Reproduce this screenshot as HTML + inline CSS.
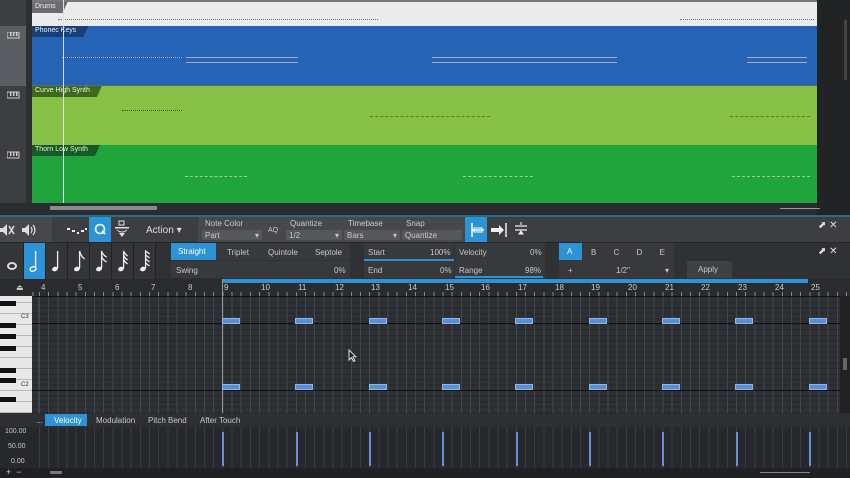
<!DOCTYPE html>
<html><head><meta charset="utf-8"><style>
*{margin:0;padding:0;box-sizing:border-box}
body{width:850px;height:478px;overflow:hidden;background:#25272a;font-family:"Liberation Sans",sans-serif;font-size:8px;color:#c8c8c8;position:relative}
.a{position:absolute}
.tl{position:absolute;left:32px;height:11px;padding:1px 12px 0 3px;font-size:7px;color:#eee;clip-path:polygon(0 0,100% 0,calc(100% - 5px) 100%,0 100%)}
.btn{position:absolute;top:243px;height:36px;border-right:1px solid #222}
.nt{position:absolute;height:6px;width:18px;background:#5b8fd0;border:1px solid #8fb6e6}
.vl{position:absolute;top:432px;height:34px;width:2px;background:#6b8fd6}
.rn{position:absolute;top:283px;font-size:8px;color:#ccc}
</style></head><body>
<div class="a" style="left:0;top:0;width:32px;height:203px;background:#3c3e42"></div>
<div class="a" style="left:0;top:26px;width:26px;height:60px;background:#5a5d62"></div>
<div class="a" style="left:26px;top:0;width:6px;height:203px;background:#2e3033"></div>
<svg class="a" style="left:7px;top:32px" width="14" height="140" viewBox="0 0 14 140" fill="#ccc">
<g><rect x="0" y="0" width="12" height="6" fill="none" stroke="#ccc"/><rect x="3" y="0" width="1.5" height="4"/><rect x="6" y="0" width="1.5" height="4"/><rect x="9" y="0" width="1.5" height="4"/></g>
<g transform="translate(0,60)"><rect x="0" y="0" width="12" height="6" fill="none" stroke="#ccc"/><rect x="3" y="0" width="1.5" height="4"/><rect x="6" y="0" width="1.5" height="4"/><rect x="9" y="0" width="1.5" height="4"/></g>
<g transform="translate(0,120)"><rect x="0" y="0" width="12" height="6" fill="none" stroke="#ccc"/><rect x="3" y="0" width="1.5" height="4"/><rect x="6" y="0" width="1.5" height="4"/><rect x="9" y="0" width="1.5" height="4"/></g>
</svg>
<div class="a" style="left:32px;top:0;width:785px;height:2px;background:#777"></div>
<div class="a" style="left:32px;top:2px;width:785px;height:24px;background:#ebebeb"></div>
<div class="a" style="left:58px;top:19px;width:320px;border-top:1px dotted #777"></div>
<div class="a" style="left:680px;top:19px;width:134px;border-top:1px dotted #777"></div>
<div class="tl" style="top:2px;background:#6a6c70">Drums</div>
<div class="a" style="left:32px;top:26px;width:785px;height:59px;background:#2564b4"></div>
<div class="a" style="left:62px;top:57px;width:120px;border-top:1px dotted #aac"></div>
<div class="a" style="left:186px;top:57px;width:112px;border-top:1px solid #aac"></div>
<div class="a" style="left:186px;top:62px;width:112px;border-top:1px solid #aac"></div>
<div class="a" style="left:432px;top:57px;width:185px;border-top:1px solid #aac"></div>
<div class="a" style="left:432px;top:62px;width:185px;border-top:1px solid #aac"></div>
<div class="a" style="left:747px;top:57px;width:60px;border-top:1px solid #aac"></div>
<div class="a" style="left:747px;top:62px;width:60px;border-top:1px solid #aac"></div>
<div class="tl" style="top:26px;background:#173f7a">Phonec Keys</div>
<div class="a" style="left:32px;top:85px;width:785px;height:1px;background:#666"></div>
<div class="a" style="left:32px;top:86px;width:785px;height:59px;background:#86c044"></div>
<div class="a" style="left:122px;top:110px;width:60px;border-top:1px dotted #3a5a20"></div>
<div class="a" style="left:370px;top:116px;width:120px;border-top:1px dashed #5a7a30"></div>
<div class="a" style="left:730px;top:116px;width:80px;border-top:1px dashed #5a7a30"></div>
<div class="tl" style="top:86px;background:#3e6a1c">Curve High Synth</div>
<div class="a" style="left:32px;top:145px;width:785px;height:58px;background:#20a53c"></div>
<div class="a" style="left:185px;top:176px;width:62px;border-top:1px dashed #8cd49a"></div>
<div class="a" style="left:463px;top:176px;width:70px;border-top:1px dashed #8cd49a"></div>
<div class="a" style="left:732px;top:176px;width:78px;border-top:1px dashed #8cd49a"></div>
<div class="tl" style="top:145px;background:#155a22">Thorn Low Synth</div>
<div class="a" style="left:63px;top:0;width:1px;height:203px;background:#dde"></div>
<div class="a" style="left:817px;top:0;width:33px;height:215px;background:#222325"></div>
<div class="a" style="left:844px;top:20px;width:3px;height:60px;background:#444"></div>
<div class="a" style="left:0;top:203px;width:817px;height:12px;background:#2b2c2f"></div>
<div class="a" style="left:50px;top:206px;width:107px;height:4px;background:#8a8b8e"></div>
<div class="a" style="left:780px;top:208px;width:40px;height:1px;background:#999"></div>
<div class="a" style="left:0;top:215px;width:850px;height:2px;background:#1f6f86"></div>
<!-- toolbar -->
<div class="a" style="left:0;top:217px;width:850px;height:25px;background:#3c3e42"></div>
<div class="a" style="left:0;top:217px;width:52px;height:25px;background:#46484c"></div>
<svg class="a" style="left:0;top:222px" width="50" height="16" viewBox="0 0 50 16" fill="#ddd" stroke="#ddd">
<path d="M0 6h3l4-4v12l-4-4H0z" stroke="none"/><path d="M9 4l5 8M14 4l-5 8" stroke-width="1.5"/>
<path d="M22 6h3l4-4v12l-4-4h-3z" stroke="none"/><path d="M31 5q2 3 0 6M33 3q4 5 0 10" fill="none" stroke-width="1.2"/>
</svg>
<svg class="a" style="left:66px;top:224px" width="22" height="12" viewBox="0 0 22 12" fill="#eee"><path d="M1 4h3v2H1zM6 6h3v2H6zM11 8h2v2h-2zM15 6h3v2h-3zM19 4h2v2h-2z"/></svg>
<div class="a" style="left:89px;top:217px;width:22px;height:25px;background:#2c93d6"></div>
<svg class="a" style="left:93px;top:222px" width="14" height="14" viewBox="0 0 14 14"><circle cx="7" cy="7" r="4.5" fill="none" stroke="#fff" stroke-width="1.6"/><path d="M9 9l3 3" stroke="#fff" stroke-width="1.6"/></svg>
<svg class="a" style="left:115px;top:220px" width="14" height="18" viewBox="0 0 14 18" fill="#ddd"><rect x="4" y="1" width="5" height="4" fill="none" stroke="#ddd"/><rect x="0" y="7" width="14" height="1.5"/><path d="M2 10q5 4 10 0" fill="none" stroke="#ddd"/><path d="M4 13h6l-3 4z"/></svg>
<div class="a" style="left:146px;top:225px;font-size:10px;color:#ddd">Action ▾</div>
<div class="a" style="left:198px;top:217px;width:267px;height:25px;background:#46484c"></div>
<div class="a" style="left:205px;top:219px;font-size:8px">Note Color</div>
<div class="a" style="left:202px;top:230px;width:60px;height:10px;background:#55575b;padding:1px 3px">Part<span style="float:right">▾</span></div>
<div class="a" style="left:268px;top:227px;font-size:7px">AQ</div>
<div class="a" style="left:290px;top:219px">Quantize</div>
<div class="a" style="left:286px;top:230px;width:56px;height:10px;background:#55575b;padding:1px 3px">1/2<span style="float:right">▾</span></div>
<div class="a" style="left:348px;top:219px">Timebase</div>
<div class="a" style="left:344px;top:230px;width:56px;height:10px;background:#55575b;padding:1px 3px">Bars<span style="float:right">▾</span></div>
<div class="a" style="left:406px;top:219px">Snap</div>
<div class="a" style="left:402px;top:230px;width:60px;height:10px;background:#55575b;padding:1px 3px">Quantize</div>
<div class="a" style="left:465px;top:217px;width:22px;height:25px;background:#2c93d6"></div>
<svg class="a" style="left:468px;top:221px" width="70" height="18" viewBox="0 0 70 18">
<path d="M4 2v14M4 9h12" stroke="#fff" stroke-width="1.5"/><rect x="6" y="7" width="8" height="4" fill="none" stroke="#fff"/>
<path d="M23 7h8V4l5 5-5 5v-3h-8z" fill="#eee"/><path d="M38 2v14" stroke="#eee" stroke-width="1.5"/>
<path d="M47 5h12M47 9h12" stroke="#eee" stroke-width="1.2"/><path d="M53 1v3M51 13h4l-2 -3z" stroke="#eee" fill="#eee"/>
</svg>
<div class="a" style="left:818px;top:220px;font-size:10px;color:#ddd">⬈ ✕</div>
<!-- row 2 -->
<div class="a" style="left:0;top:243px;width:850px;height:36px;background:#2f3134"></div>
<div class="btn" style="left:0;width:24px;background:#333539"></div>
<svg class="a" style="left:7px;top:262px" width="10" height="8"><ellipse cx="5" cy="4" rx="4" ry="3" fill="none" stroke="#ddd" stroke-width="2"/></svg>
<div class="btn" style="left:24px;width:22px;background:#2c93d6"></div>
<div class="btn" style="left:46px;width:22px;background:#333539"></div>
<div class="btn" style="left:68px;width:22px;background:#333539"></div>
<div class="btn" style="left:90px;width:22px;background:#333539"></div>
<div class="btn" style="left:112px;width:22px;background:#333539"></div>
<div class="btn" style="left:134px;width:22px;background:#333539"></div>
<svg class="a" style="left:24px;top:248px" width="132" height="26" viewBox="0 0 132 26" stroke-width="1.3">
<ellipse cx="9" cy="21" rx="3" ry="2.2" fill="none" stroke="#fff" transform="rotate(-20 9 21)"/><path d="M11.6 20V3" stroke="#fff"/>
<ellipse cx="31" cy="21" rx="3" ry="2.2" fill="#eee" transform="rotate(-20 31 21)"/><path d="M33.6 20V3" stroke="#eee"/>
<ellipse cx="53" cy="21" rx="3" ry="2.2" fill="#eee" transform="rotate(-20 53 21)"/><path d="M55.6 20V3q1 5 5 8" stroke="#eee" fill="none"/>
<ellipse cx="75" cy="21" rx="3" ry="2.2" fill="#eee" transform="rotate(-20 75 21)"/><path d="M77.6 20V3q1 4 5 6M77.6 8q1 4 5 6" stroke="#eee" fill="none"/>
<ellipse cx="97" cy="21" rx="3" ry="2.2" fill="#eee" transform="rotate(-20 97 21)"/><path d="M99.6 20V3q1 3 4 5M99.6 7q1 3 4 5M99.6 11q1 3 4 5" stroke="#eee" fill="none"/>
<ellipse cx="119" cy="21" rx="3" ry="2.2" fill="#eee" transform="rotate(-20 119 21)"/><path d="M121.6 20V3l4 3M121.6 7l4 3M121.6 11l4 3M121.6 15l4 3" stroke="#eee" fill="none"/>
</svg>
<div class="a" style="left:171px;top:243px;width:45px;height:17px;background:#2c93d6;color:#fff;padding:4px 0 0 7px">Straight</div>
<div class="a" style="left:216px;top:243px;width:134px;height:17px;background:#37393d"></div>
<div class="a" style="left:227px;top:248px">Triplet</div>
<div class="a" style="left:268px;top:248px">Quintole</div>
<div class="a" style="left:315px;top:248px">Septole</div>
<div class="a" style="left:171px;top:261px;width:179px;height:17px;background:#37393d"></div>
<div class="a" style="left:176px;top:266px">Swing</div>
<div class="a" style="left:334px;top:266px">0%</div>
<div class="a" style="left:364px;top:243px;width:90px;height:35px;background:#37393d"></div>
<div class="a" style="left:368px;top:248px">Start</div><div class="a" style="left:430px;top:248px">100%</div>
<div class="a" style="left:364px;top:259px;width:90px;height:2px;background:#2c93d6"></div>
<div class="a" style="left:368px;top:266px">End</div><div class="a" style="left:440px;top:266px">0%</div>
<div class="a" style="left:455px;top:243px;width:90px;height:35px;background:#37393d"></div>
<div class="a" style="left:459px;top:248px">Velocity</div><div class="a" style="left:530px;top:248px">0%</div>
<div class="a" style="left:459px;top:266px">Range</div><div class="a" style="left:525px;top:266px">98%</div>
<div class="a" style="left:455px;top:276px;width:88px;height:2px;background:#2c93d6"></div>
<div class="a" style="left:559px;top:243px;width:115px;height:35px;background:#37393d"></div>
<div class="a" style="left:559px;top:243px;width:23px;height:17px;background:#2c93d6;color:#fff;padding:4px 0 0 8px">A</div>
<div class="a" style="left:591px;top:248px;word-spacing:15px">B C D E</div>
<div class="a" style="left:568px;top:266px">+</div>
<div class="a" style="left:616px;top:266px">1/2"</div><div class="a" style="left:665px;top:266px">▾</div>
<div class="a" style="left:687px;top:261px;width:45px;height:17px;background:#3e4044;padding:4px 0 0 11px">Apply</div>
<div class="a" style="left:818px;top:246px;font-size:10px;color:#ddd">⬈ ✕</div>
<!-- ruler -->
<div class="a" style="left:0;top:279px;width:850px;height:17px;background:#2a2b2e;background-image:repeating-linear-gradient(90deg,#888 0 1px,transparent 1px 9.17px);background-size:100% 4px;background-repeat:repeat-x;background-position:39px 13px"></div>
<div class="a" style="left:0;top:279px;width:32px;height:17px;background:#2a2b2e"></div>
<div class="a" style="left:16px;top:283px;font-size:8px">⏏</div>
<div class="a" style="left:222px;top:279px;width:586px;height:4px;background:#2c93d6"></div>
<div class="rn" style="left:41px">4</div><div class="rn" style="left:78px">5</div><div class="rn" style="left:115px">6</div><div class="rn" style="left:151px">7</div><div class="rn" style="left:188px">8</div><div class="rn" style="left:224px">9</div><div class="rn" style="left:261px">10</div><div class="rn" style="left:298px">11</div><div class="rn" style="left:335px">12</div><div class="rn" style="left:371px">13</div><div class="rn" style="left:408px">14</div><div class="rn" style="left:445px">15</div><div class="rn" style="left:481px">16</div><div class="rn" style="left:518px">17</div><div class="rn" style="left:555px">18</div><div class="rn" style="left:591px">19</div><div class="rn" style="left:628px">20</div><div class="rn" style="left:665px">21</div><div class="rn" style="left:701px">22</div><div class="rn" style="left:738px">23</div><div class="rn" style="left:775px">24</div><div class="rn" style="left:811px">25</div>
<!-- piano roll -->
<div class="a" style="left:32px;top:296px;width:808px;height:117px;background-color:#2d3034;background-image:repeating-linear-gradient(90deg,#43464b 0 1px,transparent 1px 9.17px),repeating-linear-gradient(0deg,#25272a 0 1px,transparent 1px 5.5px);background-position:7px 0,0 0"></div>
<div class="a" style="left:32px;top:296px;width:808px;height:1px;background:#111"></div>
<div class="a" style="left:0;top:296px;width:32px;height:117px;background:#e8e8e8;background-image:repeating-linear-gradient(180deg,transparent 0 6px,#bbb 6px 7px,transparent 7px 11px)"></div>
<div class="a" style="left:0;top:301px;width:16px;height:5px;background:#111"></div>
<div class="a" style="left:0;top:323px;width:16px;height:5px;background:#111"></div>
<div class="a" style="left:0;top:334px;width:16px;height:5px;background:#111"></div>
<div class="a" style="left:0;top:346px;width:16px;height:5px;background:#111"></div>
<div class="a" style="left:0;top:368px;width:16px;height:5px;background:#111"></div>
<div class="a" style="left:0;top:378px;width:16px;height:5px;background:#111"></div>
<div class="a" style="left:0;top:397px;width:16px;height:5px;background:#111"></div>
<div class="a" style="left:21px;top:314px;font-size:6px;color:#333">C3</div>
<div class="a" style="left:21px;top:382px;font-size:6px;color:#333">C2</div>
<div class="a" style="left:32px;top:323px;width:808px;height:1px;background:#111"></div>
<div class="a" style="left:32px;top:390px;width:808px;height:1px;background:#111"></div>
<div class="a" style="left:222px;top:279px;width:1px;height:189px;background:#999"></div>
<div class="nt" style="left:222px;top:318px"></div><div class="nt" style="left:295px;top:318px"></div><div class="nt" style="left:369px;top:318px"></div><div class="nt" style="left:442px;top:318px"></div><div class="nt" style="left:515px;top:318px"></div><div class="nt" style="left:589px;top:318px"></div><div class="nt" style="left:662px;top:318px"></div><div class="nt" style="left:735px;top:318px"></div><div class="nt" style="left:809px;top:318px"></div>
<div class="nt" style="left:222px;top:384px"></div><div class="nt" style="left:295px;top:384px"></div><div class="nt" style="left:369px;top:384px"></div><div class="nt" style="left:442px;top:384px"></div><div class="nt" style="left:515px;top:384px"></div><div class="nt" style="left:589px;top:384px"></div><div class="nt" style="left:662px;top:384px"></div><div class="nt" style="left:735px;top:384px"></div><div class="nt" style="left:809px;top:384px"></div>
<svg class="a" style="left:348px;top:349px" width="9" height="13" viewBox="0 0 9 13"><path d="M1 1v10l2.5-2.5 2 4 1.5-.7-2-4H8z" fill="#222" stroke="#ddd" stroke-width="1"/></svg>
<div class="a" style="left:840px;top:296px;width:10px;height:117px;background:#222"></div>
<div class="a" style="left:843px;top:358px;width:4px;height:12px;background:#666"></div>
<!-- tabs -->
<div class="a" style="left:0;top:413px;width:850px;height:14px;background:#2d2f32"></div>
<div class="a" style="left:36px;top:416px">...</div>
<div class="a" style="left:45px;top:414px;width:42px;height:12px;background:#2c93d6;color:#fff;padding:2px 0 0 9px">Velocity</div>
<div class="a" style="left:96px;top:416px">Modulation</div>
<div class="a" style="left:148px;top:416px">Pitch Bend</div>
<div class="a" style="left:200px;top:416px">After Touch</div>
<!-- velocity -->
<div class="a" style="left:0;top:427px;width:850px;height:41px;background-color:#26282b;background-image:repeating-linear-gradient(90deg,#393b3f 0 1px,transparent 1px 9.17px);background-position:39px 0"></div>
<div class="a" style="left:0;top:427px;width:35px;height:41px;background:#26282b"></div>
<div class="a" style="left:5px;top:428px;font-size:7px">100.00</div>
<div class="a" style="left:8px;top:443px;font-size:7px">50.00</div>
<div class="a" style="left:11px;top:458px;font-size:7px">0.00</div>
<div class="vl" style="left:222px"></div><div class="vl" style="left:296px"></div><div class="vl" style="left:369px"></div><div class="vl" style="left:442px"></div><div class="vl" style="left:516px"></div><div class="vl" style="left:589px"></div><div class="vl" style="left:662px"></div><div class="vl" style="left:736px"></div><div class="vl" style="left:809px"></div>
<div class="a" style="left:0;top:468px;width:850px;height:10px;background:#1f2022"></div>
<div class="a" style="left:6px;top:467px;font-size:9px;color:#ccc">+ &nbsp;−</div>
<div class="a" style="left:50px;top:471px;width:12px;height:3px;background:#777"></div>
<div class="a" style="left:760px;top:472px;width:50px;height:1px;background:#888"></div>
</body></html>
